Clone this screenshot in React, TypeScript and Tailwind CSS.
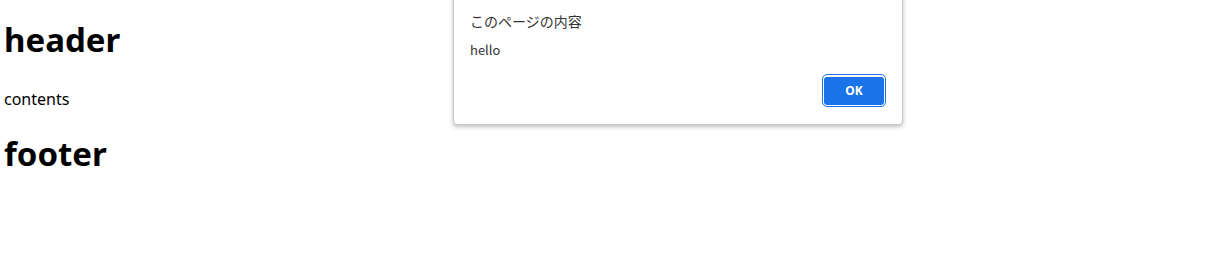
import React from "react";

export default function App() {
  return (
    <div className="relative w-[1224px] h-[264px] bg-white overflow-hidden">
      <div className="pl-1 text-black font-['Noto_Sans','Noto_Sans_CJK_JP',sans-serif]">
        <h1 className="pt-[16px] text-[33px] leading-[48px] font-bold">header</h1>
        <p className="mt-[23px] text-[16px] leading-[24px]">contents</p>
        <h1 className="mt-[19px] text-[33px] leading-[48px] font-bold">footer</h1>
      </div>

      <div className="absolute left-[453px] top-[-8px] w-[450px] h-[133px] bg-white rounded-[4px] border border-[#c8c8c8] shadow-[0_2px_4px_rgba(0,0,0,0.25)] font-['Noto_Sans_CJK_JP','Noto_Sans',sans-serif] text-[#333333]">
        <div className="pl-[16px] pt-[18px] text-[14px] leading-[20px]">このページの内容</div>
        <div className="pl-[16px] pt-[10px] text-[13px] leading-[18px]">hello</div>
        <div className="flex justify-end pr-[16px] pt-[15px]">
          <div className="rounded-[5px] border border-[#1a73e8] p-[1px] bg-white">
            <button className="w-[60px] h-[28px] rounded-[3px] bg-[#1a73e8] text-white text-[12px] font-bold font-['Noto_Sans',sans-serif]">
              OK
            </button>
          </div>
        </div>
      </div>
    </div>
  );
}
